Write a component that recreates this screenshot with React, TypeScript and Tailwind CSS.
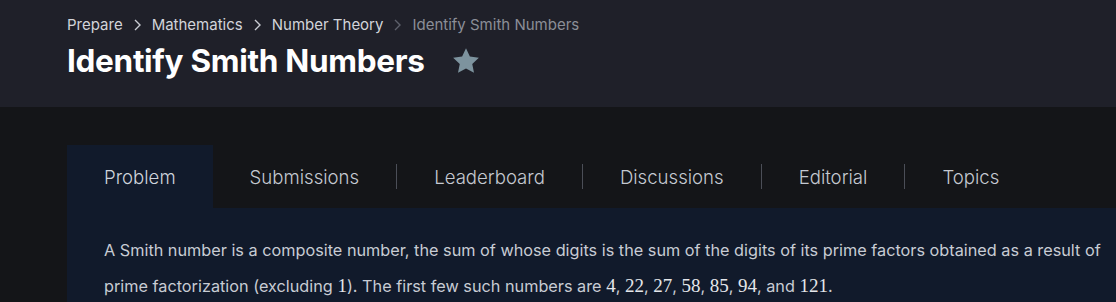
import React from "react";

const tabs = ["Problem", "Submissions", "Leaderboard", "Discussions", "Editorial", "Topics"];

const Chevron = ({ dim }: { dim?: boolean }) => (
  <svg
    width="9"
    height="14"
    viewBox="0 0 9 14"
    fill="none"
    stroke={dim ? "#5d606b" : "#c9ccd3"}
    strokeWidth="1.4"
    className="mx-[10px]"
  >
    <path d="M2 2l5 5-5 5" />
  </svg>
);

const Num = ({ children }: { children: React.ReactNode }) => (
  <span className="font-['Liberation_Serif',serif] text-[19px] text-[#e4e6ea]">{children}</span>
);

export default function App() {
  return (
    <div className="w-[1116px] h-[302px] overflow-hidden bg-[#141518] font-['Inter',sans-serif]">
      {/* header */}
      <div className="h-[107px] bg-[#1f2029] px-[67px] pt-[14px]">
        <div className="flex items-center text-[15px] text-[#d2d4da] leading-[22px]">
          <span>Prepare</span>
          <Chevron />
          <span>Mathematics</span>
          <Chevron />
          <span>Number Theory</span>
          <Chevron dim />
          <span className="text-[#8b8e97]">Identify Smith Numbers</span>
        </div>
        <div className="flex items-center mt-[5px]">
          <h1 className="text-[31.5px] font-bold text-white tracking-[-0.3px] leading-[40px]">
            Identify Smith Numbers
          </h1>
          <svg width="30" height="30" viewBox="0 0 24 24" className="ml-[26px]" fill="#7d939e">
            <path d="M12 1.8l3.1 6.6 7.2.9-5.3 5 1.4 7.1L12 17.9l-6.4 3.5 1.4-7.1-5.3-5 7.2-.9z" />
          </svg>
        </div>
      </div>

      {/* tabs */}
      <div className="pl-[67px] pt-[38px]">
        <div className="flex h-[63px] items-center">
          {tabs.map((t, i) => (
            <React.Fragment key={t}>
              {i > 1 && <div className="w-px h-[25px] bg-[#4b4e57]" />}
              <div
                className={
                  "h-full flex items-center px-[37px] pt-[3px] text-[18.6px] font-[350] " +
                  (i === 0 ? "bg-[#111a2b] text-[#cfd4dc]" : "text-[#c5c9d1]")
                }
              >
                {t}
              </div>
            </React.Fragment>
          ))}
        </div>
        <div className="bg-[#111a2b] pl-[37px] pt-[25px] text-[16.25px] leading-[35px] text-[#c8ccd4] h-[100px]">
          <p>
            A Smith number is a composite number, the sum of whose digits is the sum of the digits of its prime factors obtained as a result of
          </p>
          <p>
            prime factorization (excluding <Num>1</Num>). The first few such numbers are <Num>4</Num>, <Num>22</Num>,{" "}
            <Num>27</Num>, <Num>58</Num>, <Num>85</Num>, <Num>94</Num>, and <Num>121</Num>.
          </p>
        </div>
      </div>
    </div>
  );
}
